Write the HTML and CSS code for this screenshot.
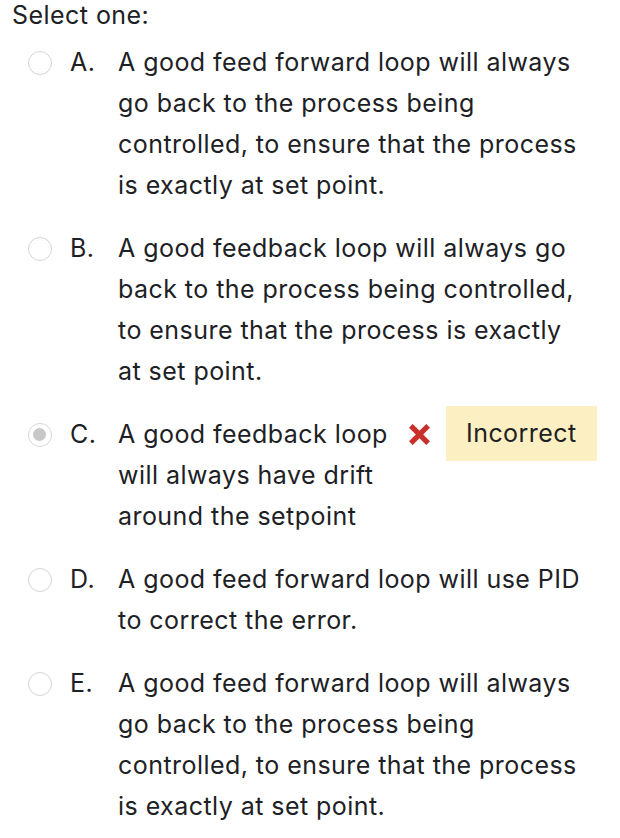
FILE: index.html
```html
<!DOCTYPE html>
<html>
<head>
<meta charset="utf-8">
<link rel="stylesheet" href="styles.css">
</head>
<body>
<div class="prompt">Select one:</div>
<div class="answers">
  <div class="opt">
    <span class="radio"></span>
    <span class="letter">A.</span>
    <span class="text">A good feed forward loop will always go back to the process being controlled, to ensure that the process is exactly at set point.</span>
  </div>
  <div class="opt">
    <span class="radio"></span>
    <span class="letter">B.</span>
    <span class="text">A good feedback loop will always go back to the process being controlled, to ensure that the process is exactly at set point.</span>
  </div>
  <div class="opt">
    <span class="radio checked"></span>
    <span class="letter">C.</span>
    <span class="text narrow">A good feedback loop will always have drift around the setpoint</span>
    <svg class="xicon" viewBox="0 0 20 20" width="21" height="21"><path d="M3.5 3.5 L16.5 16.5 M16.5 3.5 L3.5 16.5" stroke="#c9302c" stroke-width="5" stroke-linecap="square"/></svg>
    <span class="badge">Incorrect</span>
  </div>
  <div class="opt">
    <span class="radio"></span>
    <span class="letter">D.</span>
    <span class="text">A good feed forward loop will use PID to correct the error.</span>
  </div>
  <div class="opt">
    <span class="radio"></span>
    <span class="letter">E.</span>
    <span class="text">A good feed forward loop will always go back to the process being controlled, to ensure that the process is exactly at set point.</span>
  </div>
</div>
</body>
</html>
```
FILE: styles.css
```css
html, body {
  margin: 0;
  padding: 0;
  background: #fff;
}
body {
  font-family: Inter, Roboto, "Liberation Sans", sans-serif;
  font-size: 25px;
  letter-spacing: 0.45px;
  color: #1d2125;
  line-height: 41px;
}
.prompt {
  padding: 0 0 0 12px;
  margin-top: -5px;
  line-height: 41px;
}
.answers {
  padding: 6px 34px 0 28px;
}
.opt {
  display: flex;
  align-items: flex-start;
  margin-bottom: 22px;
}
.radio {
  flex: none;
  width: 24px;
  height: 24px;
  border: 1.5px solid #d4d4d4;
  border-radius: 50%;
  box-sizing: border-box;
  margin-top: 9px;
  background: #fff;
  position: relative;
}
.radio.checked {
  border-color: #d8d8d8;
}
.radio.checked::after {
  content: "";
  position: absolute;
  left: 4px;
  top: 4px;
  width: 13px;
  height: 13px;
  border-radius: 50%;
  background: #c8c8c8;
}
.letter {
  flex: none;
  width: 48px;
  margin-left: 18px;
}
.text {
  flex: 1;
}
.text.narrow {
  flex: none;
  width: 274px;
}
.xicon {
  flex: none;
  margin-left: 17px;
  margin-top: 10px;
}
.badge {
  flex: none;
  margin-left: 16px;
  margin-top: -8px;
  background: #fcefc1;
  padding: 7px 20px 7px 20px;
  line-height: 41px;
  white-space: nowrap;
}
```
